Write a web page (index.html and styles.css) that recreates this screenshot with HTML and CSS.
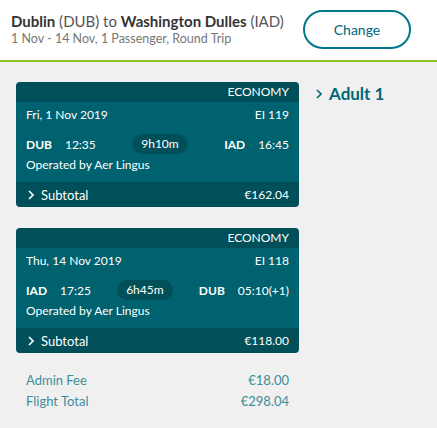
FILE: index.html
```html
<!DOCTYPE html>
<html>
<head>
<meta charset="utf-8">
<link rel="stylesheet" href="styles.css">
</head>
<body>
<header class="top">
  <div class="trip">
    <div class="route"><b>Dublin</b> (DUB) to <b>Washington Dulles</b> (IAD)</div>
    <div class="dates">1 Nov - 14 Nov, 1 Passenger, Round Trip</div>
  </div>
  <button class="change">Change</button>
</header>
<main class="main">
  <div class="left">
    <section class="card">
      <div class="card-top">ECONOMY</div>
      <div class="card-body">
        <div class="row date-row"><span>Fri, 1 Nov 2019</span><span>EI 119</span></div>
        <div class="row leg-row">
          <div class="pt"><b class="code">DUB</b><span>12:35</span></div>
          <span class="pill">9h10m</span>
          <div class="pt"><b class="code">IAD</b><span>16:45</span></div>
        </div>
        <div class="op">Operated by Aer Lingus</div>
      </div>
      <div class="card-foot"><span class="sub"><svg class="chev" viewBox="0 0 6 10" width="6" height="10"><path d="M1 1l4 4-4 4" fill="none" stroke="currentColor" stroke-width="1.6"/></svg>Subtotal</span><span>€162.04</span></div>
    </section>
    <section class="card">
      <div class="card-top">ECONOMY</div>
      <div class="card-body">
        <div class="row date-row"><span>Thu, 14 Nov 2019</span><span>EI 118</span></div>
        <div class="row leg-row">
          <div class="pt"><b class="code">IAD</b><span>17:25</span></div>
          <span class="pill">6h45m</span>
          <div class="pt"><b class="code">DUB</b><span>05:10(+1)</span></div>
        </div>
        <div class="op">Operated by Aer Lingus</div>
      </div>
      <div class="card-foot"><span class="sub"><svg class="chev" viewBox="0 0 6 10" width="6" height="10"><path d="M1 1l4 4-4 4" fill="none" stroke="currentColor" stroke-width="1.6"/></svg>Subtotal</span><span>€118.00</span></div>
    </section>
    <div class="totals">
      <div class="trow"><span>Admin Fee</span><span>€18.00</span></div>
      <div class="trow"><span>Flight Total</span><span>€298.04</span></div>
    </div>
  </div>
  <div class="right">
    <div class="adult"><svg class="chev2" viewBox="0 0 6 10" width="6" height="10"><path d="M1 1l4 4-4 4" fill="none" stroke="currentColor" stroke-width="1.6"/></svg>Adult 1</div>
  </div>
</main>
</body>
</html>
```
FILE: styles.css
```css
* { box-sizing: border-box; }
body {
  margin: 0;
  background: #f0f0f0;
  font-family: Lato, "Noto Sans", sans-serif;
  color: #333;
}
.top {
  display: flex;
  align-items: center;
  height: 62px;
  background: #fff;
  border-bottom: 2px solid #8cc11b;
  padding: 0 26px 2px 11px;
}
.trip { flex: 1; }
.route {
  font-size: 15px;
  line-height: 19px;
  color: #555;
}
.route b { color: #333; }
.dates {
  font-size: 12.5px;
  line-height: 16px;
  color: #777;
}
.change {
  width: 108px;
  height: 39px;
  border: 2px solid #00778b;
  border-radius: 20px;
  background: #fff;
  color: #00677a;
  font-family: inherit;
  font-size: 14px;
}
.main {
  display: flex;
  padding: 20px 16px;
}
.left {
  width: 283px;
  display: flex;
  flex-direction: column;
  gap: 21px;
}
.card {
  border-radius: 4px;
  overflow: hidden;
  color: #fff;
  font-size: 12px;
}
.card-top {
  height: 20px;
  line-height: 20px;
  background: #004f59;
  text-align: right;
  padding: 0 10px;
}
.card-body {
  height: 80px;
  background: #00616f;
  padding: 0 10px;
}
.row {
  display: flex;
  justify-content: space-between;
  align-items: center;
}
.date-row { height: 24px; }
.leg-row { height: 30px; margin-top: 3px; }
.pt { display: flex; gap: 13px; min-width: 64px; }
.code { font-weight: 700; }
.pill {
  background: #004f59;
  border-radius: 10px;
  padding: 0 9px;
  height: 20px;
  line-height: 20px;
}
.op { line-height: 12px; }
.card-foot {
  height: 25px;
  background: #004f59;
  display: flex;
  justify-content: space-between;
  align-items: center;
  padding: 0 10px 0 12px;
}
.sub { display: flex; align-items: center; gap: 7px; font-size: 13px; }
.totals {
  margin-top: -4px;
  padding: 0 10px;
  color: #3d8d9a;
  font-size: 13px;
}
.trow {
  display: flex;
  justify-content: space-between;
  line-height: 21px;
}
.right { padding-left: 17px; padding-top: 1px; }
.adult {
  display: flex;
  align-items: center;
  gap: 7px;
  font-weight: 700;
  font-size: 17px;
  color: #00677a;
}
```
